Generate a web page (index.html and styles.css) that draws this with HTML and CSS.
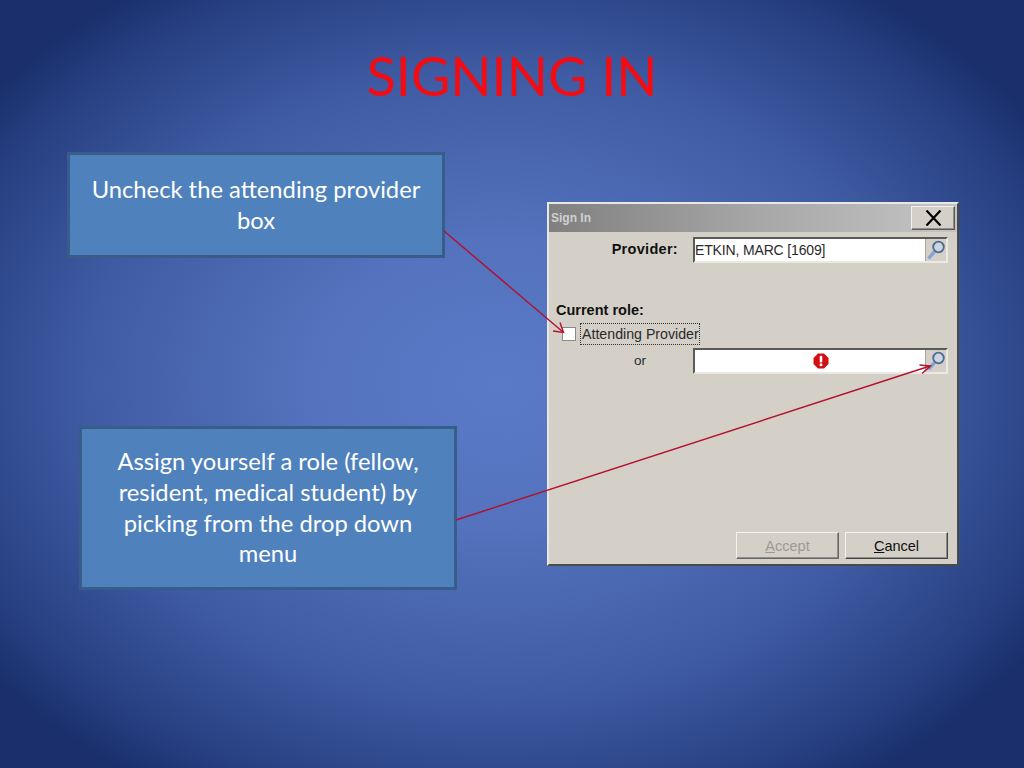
FILE: index.html
```html
<!DOCTYPE html>
<html lang="en">
<head>
<meta charset="utf-8">
<title>Signing In</title>
<link rel="stylesheet" href="styles.css">
</head>
<body>
<main class="slide">
  <h1 class="title">SIGNING IN</h1>

  <div class="callout callout-one">Uncheck the attending provider box</div>
  <div class="callout callout-two">Assign yourself a role (fellow, resident, medical student) by picking from the drop down menu</div>

  <section class="dialog">
    <header class="titlebar">
      <span class="titlebar-text">Sign In</span>
      <span class="close">
        <svg width="17" height="16" viewBox="0 0 17 16"><path d="M1.500 0.500L15.500 15.500M15.500 0.500L1.500 15.500" stroke="#000" stroke-width="2.200" fill="none"/></svg>
      </span>
    </header>
    <div class="dialog-body">
      <div class="row provider-row">
        <span class="label-strong provider-label">Provider:</span>
        <div class="field">
          <span class="field-text">ETKIN, MARC [1609]</span>
          <span class="lookup">
            <svg width="20" height="20" viewBox="0 0 20 20"><path d="M2.500 18.500L8.500 11.500" stroke="#86a2d6" stroke-width="3.400" fill="none"/><circle cx="12.500" cy="7" r="5.300" fill="#cdd5de" stroke="#4c6c96" stroke-width="1.800"/></svg>
          </span>
        </div>
      </div>
      <div class="label-strong role-label">Current role:</div>
      <div class="check-row">
        <span class="checkbox"></span>
        <span class="check-label">Attending Provider</span>
      </div>
      <div class="row or-row">
        <span class="or">or</span>
        <div class="field">
          <span class="field-alert">
            <svg width="16" height="16" viewBox="0 0 16 16"><path d="M5 0.500H11L15.500 5V11L11 15.500H5L0.500 11V5Z" fill="#d40f14"/><rect x="6.700" y="2.800" width="2.600" height="6.600" rx="1" fill="#fff"/><circle cx="8" cy="11.800" r="1.500" fill="#fff"/></svg>
          </span>
          <span class="lookup">
            <svg width="20" height="20" viewBox="0 0 20 20"><path d="M2.500 18.500L8.500 11.500" stroke="#86a2d6" stroke-width="3.400" fill="none"/><circle cx="12.500" cy="7" r="5.300" fill="#cdd5de" stroke="#4c6c96" stroke-width="1.800"/></svg>
          </span>
        </div>
      </div>
      <div class="actions">
        <span class="button button-disabled"><u>A</u>ccept</span>
        <span class="button"><u>C</u>ancel</span>
      </div>
    </div>
  </section>

  <svg class="arrows" width="1024" height="768" viewBox="0 0 1024 768">
    <g stroke="#b5102a" stroke-width="1.400" fill="none">
      <path d="M444 231L563 332"/>
      <path d="M553 331L563.500 332.500L560 322.500"/>
      <path d="M456 520L930 366"/>
      <path d="M919.500 365L930.500 366L922 373.500"/>
    </g>
  </svg>
</main>
</body>
</html>
```

FILE: styles.css
```css
* {
  box-sizing: border-box;
}

html,
body {
  margin: 0;
  padding: 0;
}

.slide {
  position: relative;
  width: 1024px;
  height: 768px;
  overflow: hidden;
  background: radial-gradient(ellipse 640px 480px at 500px 384px, #5a7ac8 0%, #5472bd 30%, #3f5ba3 65%, #263f80 90%, #1a2f6c 100%);
  font-family: Lato, "Open Sans", sans-serif;
}

.title {
  margin: 0;
  padding-top: 43px;
  text-align: center;
  font-family: Lato, "Open Sans", sans-serif;
  font-weight: 400;
  font-size: 54px;
  line-height: 66px;
  color: #f20d14;
}

.callout {
  position: absolute;
  display: flex;
  align-items: center;
  justify-content: center;
  text-align: center;
  background: #4f81bd;
  border: 3px solid #385d8a;
  color: #fff;
  font-size: 23.750px;
  line-height: 30.700px;
}

.callout-one {
  left: 67px;
  top: 152px;
  width: 378px;
  height: 106px;
  padding: 0 20px 1px;
}

.callout-two {
  left: 79px;
  top: 426px;
  width: 378px;
  height: 164px;
  padding: 0 30px 1px;
}

.dialog {
  position: absolute;
  left: 547px;
  top: 202px;
  width: 412px;
  height: 364px;
  display: flex;
  flex-direction: column;
  background: #d4d0c8;
  border: 2px solid;
  border-color: #e9e7e2 #4a4a48 #4a4a48 #e9e7e2;
  font-family: "Liberation Sans", Arial, sans-serif;
  color: #111;
}

.titlebar {
  display: flex;
  align-items: center;
  justify-content: space-between;
  height: 28px;
  padding: 0 2px 0 2px;
  background: linear-gradient(90deg, #808080 0%, #a6a6a6 50%, #c4c4c4 100%);
}

.titlebar-text {
  font-size: 12px;
  font-weight: 700;
  color: #d0d0d0;
}

.close {
  display: flex;
  align-items: center;
  justify-content: center;
  width: 44px;
  height: 24px;
  background: #d4d0c8;
  border: 1px solid;
  border-color: #f2f1ed #5a5a58 #5a5a58 #f2f1ed;
  box-shadow: inset -1px -1px #908e88;
}

.dialog-body {
  flex: 1;
  display: flex;
  flex-direction: column;
  padding: 5px 9px 5px 7px;
}

.row {
  display: flex;
  align-items: center;
}

.label-strong {
  font-size: 14.500px;
  font-weight: 700;
}

.provider-label {
  margin-right: 15px;
  padding-bottom: 3px;
  letter-spacing: 0.300px;
}

.provider-row {
  justify-content: flex-end;
}

.field {
  flex: none;
  display: flex;
  align-items: center;
  width: 255px;
  height: 26px;
  background: #fff;
  border: 2px solid;
  border-color: #5a5a58 #ece9e4 #ece9e4 #5a5a58;
}

.field-text {
  flex: 1;
  padding-bottom: 1px;
  font-size: 14px;
  letter-spacing: -0.150px;
  color: #2a2a2a;
}

.field-alert {
  flex: 1;
  display: flex;
  justify-content: center;
  padding-left: 22px;
}

.lookup {
  display: flex;
  align-items: center;
  justify-content: center;
  width: 21px;
  height: 22px;
  background: #d4d0c8;
  border-left: 1px solid #a8a59e;
}

.role-label {
  margin-top: 39px;
}

.check-row {
  display: flex;
  align-items: center;
  gap: 4px;
  margin-top: 5px;
  padding-left: 6px;
}

.checkbox {
  width: 14px;
  height: 14px;
  background: #fff;
  border: 1px solid #8a8a86;
}

.check-label {
  padding: 2px 0 2px 1px;
  border: 1px dotted #333;
  font-size: 14.200px;
  line-height: 16px;
  color: #2a2a2a;
}

.or-row {
  justify-content: flex-end;
  margin-top: 3px;
}

.or {
  margin-right: 47px;
  padding-bottom: 1px;
  font-size: 13.500px;
  color: #2a2a2a;
}

.actions {
  display: flex;
  justify-content: flex-end;
  gap: 6px;
  margin-top: auto;
}

.button {
  display: flex;
  align-items: center;
  justify-content: center;
  width: 103px;
  height: 27px;
  background: #d4d0c8;
  border: 1px solid;
  border-color: #f4f3ef #444 #444 #f4f3ef;
  box-shadow: inset -1px -1px #908e88;
  font-size: 14.500px;
  color: #111;
}

.button-disabled {
  color: #9c9a94;
  border-color: #f4f3ef #666 #666 #f4f3ef;
}

.arrows {
  position: absolute;
  left: 0;
  top: 0;
  pointer-events: none;
}
```
